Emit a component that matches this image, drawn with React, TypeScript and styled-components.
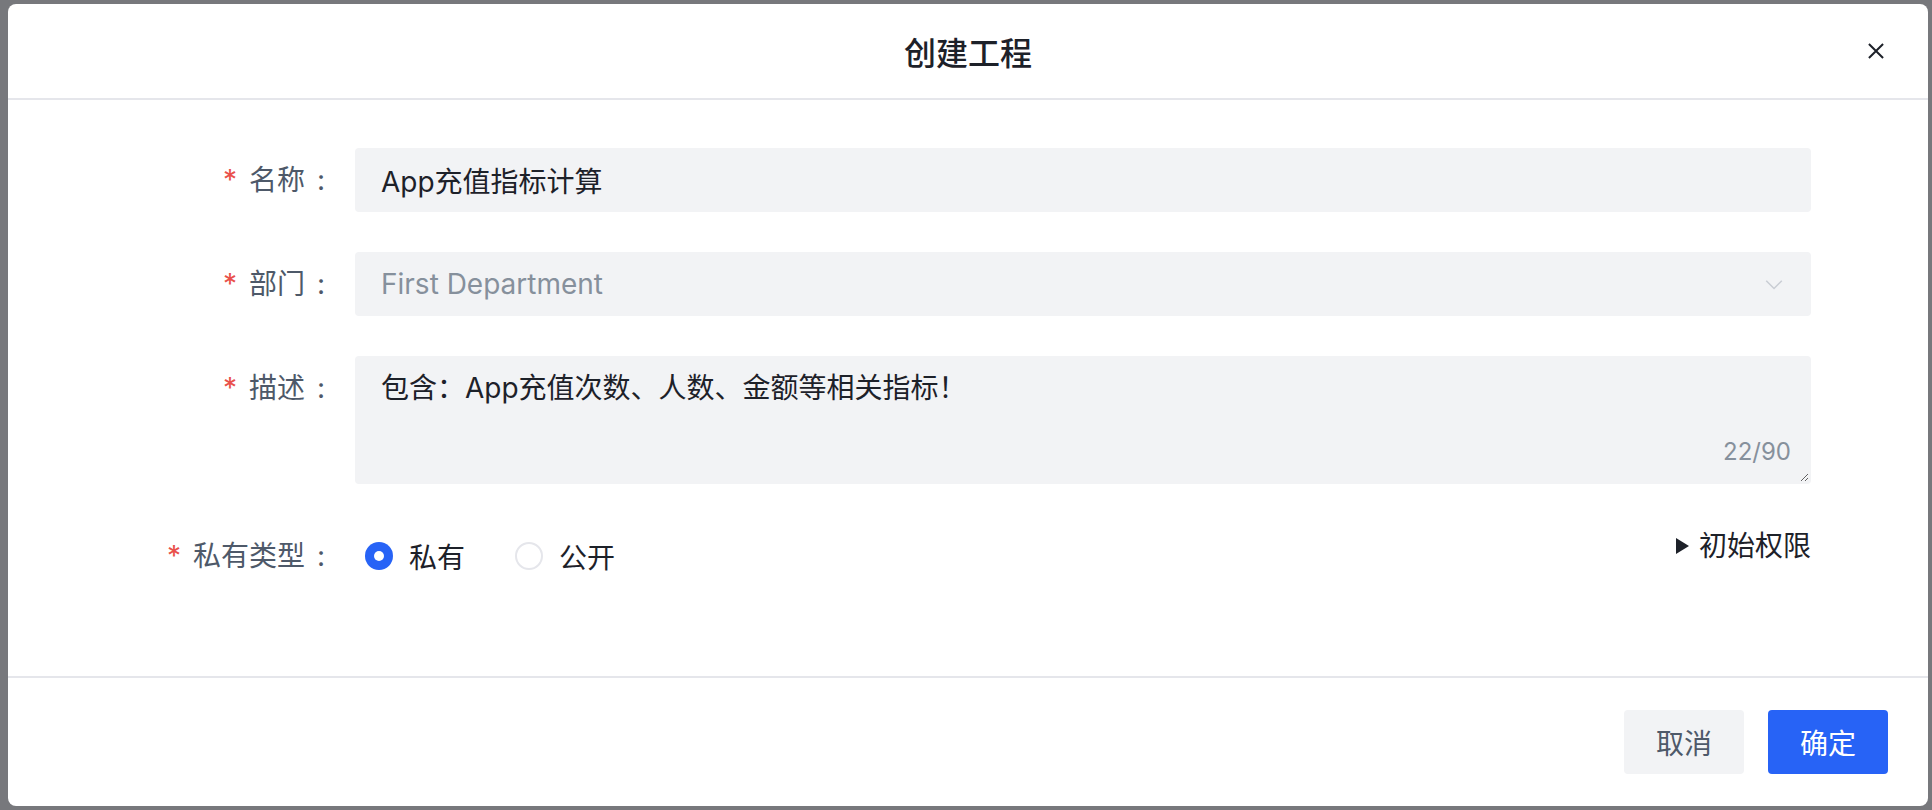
import React from "react";
import styled, { createGlobalStyle } from "styled-components";

const colors = {
  backdrop: "#77787c",
  border: "#e5e6eb",
  fill: "#f2f3f5",
  text1: "#1d2129",
  text2: "#4e5969",
  text3: "#86909c",
  text4: "#c9cdd4",
  primary: "#2763f6",
  danger: "#e9504b",
};

const font = `Inter, "Noto Sans CJK SC", sans-serif`;

const GlobalStyle = createGlobalStyle`
  html, body {
    margin: 0;
    height: 810px;
    background: ${colors.backdrop};
  }

  body {
    box-sizing: border-box;
    padding: 4px 4px 4px 8px;
    font-family: ${font};
  }
`;

const CloseIcon = () => (
  <svg width="24" height="24" viewBox="0 0 48 48" fill="none">
    <path
      d="M9.857 9.858 24 24m0 0 14.142 14.142M24 24l14.142-14.142M24 24 9.858 38.142"
      stroke={colors.text1}
      strokeWidth="4"
    />
  </svg>
);

const DownIcon = () => (
  <svg width="24" height="24" viewBox="0 0 48 48" fill="none">
    <path d="M39.6 17.443 24.043 33 8.487 17.443" stroke={colors.text4} strokeWidth="3" />
  </svg>
);

interface IFieldLabel {
  children: React.ReactNode;
}

const FieldLabel = ({ children }: IFieldLabel) => (
  <Label>
    <Asterisk>*</Asterisk>
    {children}
    <Colon>:</Colon>
  </Label>
);

interface IRadio {
  label: string;
  checked?: boolean;
}

const Radio = ({ label, checked }: IRadio) => (
  <RadioItem>
    <RadioMask $checked={!!checked} />
    <span>{label}</span>
  </RadioItem>
);

const App = () => {
  return (
    <>
      <GlobalStyle />
      <Modal>
        <Header>
          <span />
          <Title>创建工程</Title>
          <CloseButton aria-label="关闭">
            <CloseIcon />
          </CloseButton>
        </Header>

        <Form>
          <FieldLabel>名称</FieldLabel>
          <Input readOnly value="App充值指标计算" />

          <FieldLabel>部门</FieldLabel>
          <Select>
            <Placeholder>First Department</Placeholder>
            <DownIcon />
          </Select>

          <FieldLabel>描述</FieldLabel>
          <TextareaWrap>
            <Textarea readOnly value="包含：App充值次数、人数、金额等相关指标！" />
            <WordLimit>22/90</WordLimit>
          </TextareaWrap>

          <FieldLabel>私有类型</FieldLabel>
          <RadioRow>
            <RadioGroup>
              <Radio label="私有" checked />
              <Radio label="公开" />
            </RadioGroup>
            <Disclosure>
              <Caret />
              初始权限
            </Disclosure>
          </RadioRow>
        </Form>

        <Footer>
          <Button>取消</Button>
          <Button $primary>确定</Button>
        </Footer>
      </Modal>
    </>
  );
};

export default App;

const Modal = styled.div`
  width: 1920px;
  height: 802px;
  display: flex;
  flex-direction: column;
  background: #fff;
  border-radius: 8px;
  overflow: hidden;
`;

const Header = styled.div`
  height: 94px;
  display: grid;
  grid-template-columns: 1fr auto 1fr;
  align-items: center;
  border-bottom: 2px solid ${colors.border};
`;

const Title = styled.div`
  font-size: 32px;
  font-weight: 500;
  color: ${colors.text1};
`;

const CloseButton = styled.button`
  justify-self: end;
  margin-right: 40px;
  width: 24px;
  height: 24px;
  padding: 0;
  border: none;
  background: none;
  display: flex;
  cursor: pointer;
`;

const Form = styled.div`
  flex: 1;
  display: grid;
  grid-template-columns: 347px 1fr;
  row-gap: 40px;
  align-content: start;
  padding: 48px 117px 48px 0;
`;

const Label = styled.label`
  text-align: right;
  padding-right: 30px;
  line-height: 64px;
  font-size: 28px;
  color: ${colors.text2};
  white-space: nowrap;
`;

const Asterisk = styled.span`
  color: ${colors.danger};
  margin-right: 12px;
`;

const Colon = styled.span`
  margin-left: 12px;
`;

const fieldBase = `
  box-sizing: border-box;
  width: 100%;
  border: 2px solid transparent;
  border-radius: 4px;
  background: ${colors.fill};
  font-family: ${font};
  font-size: 28px;
  color: ${colors.text1};
`;

const Input = styled.input`
  ${fieldBase}
  height: 64px;
  padding: 0 24px;
  outline: none;
`;

const Select = styled.div`
  ${fieldBase}
  height: 64px;
  padding: 0 23px 0 24px;
  display: flex;
  align-items: center;
  justify-content: space-between;
`;

const Placeholder = styled.span`
  color: ${colors.text3};
`;

const TextareaWrap = styled.div`
  position: relative;
  height: 128px;
`;

const Textarea = styled.textarea`
  ${fieldBase}
  display: block;
  height: 100%;
  padding: 8px 24px;
  line-height: 44px;
  resize: vertical;
  outline: none;
`;

const WordLimit = styled.span`
  position: absolute;
  right: 20px;
  bottom: 16px;
  font-size: 24px;
  line-height: 32px;
  color: ${colors.text3};
`;

const RadioRow = styled.div`
  height: 64px;
  display: flex;
  justify-content: space-between;
  align-items: flex-start;
`;

const RadioGroup = styled.div`
  height: 64px;
  display: flex;
  align-items: center;
`;

const RadioItem = styled.label`
  display: flex;
  align-items: center;
  gap: 16px;
  padding-left: 10px;
  margin-right: 40px;
  font-size: 28px;
  color: ${colors.text1};
`;

const RadioMask = styled.span<{ $checked: boolean }>`
  box-sizing: border-box;
  width: 28px;
  height: 28px;
  border-radius: 50%;
  display: flex;
  align-items: center;
  justify-content: center;
  background: ${({ $checked }) => ($checked ? colors.primary : "#fff")};
  border: ${({ $checked }) => ($checked ? "none" : `2px solid ${colors.border}`)};

  &::after {
    content: "";
    display: ${({ $checked }) => ($checked ? "block" : "none")};
    width: 10px;
    height: 10px;
    border-radius: 50%;
    background: #fff;
  }
`;

const Disclosure = styled.div`
  display: flex;
  align-items: center;
  gap: 10px;
  font-size: 28px;
  line-height: 44px;
  color: ${colors.text1};
`;

const Caret = styled.span`
  width: 0;
  height: 0;
  border-left: 13px solid ${colors.text1};
  border-top: 8px solid transparent;
  border-bottom: 8px solid transparent;
`;

const Footer = styled.div`
  display: flex;
  justify-content: flex-end;
  gap: 24px;
  padding: 32px 40px;
  border-top: 2px solid ${colors.border};
`;

const Button = styled.button<{ $primary?: boolean }>`
  height: 64px;
  padding: 0 30px;
  border: 2px solid transparent;
  border-radius: 4px;
  font-family: ${font};
  font-size: 28px;
  cursor: pointer;
  background: ${({ $primary }) => ($primary ? colors.primary : colors.fill)};
  color: ${({ $primary }) => ($primary ? "#fff" : colors.text2)};
`;
